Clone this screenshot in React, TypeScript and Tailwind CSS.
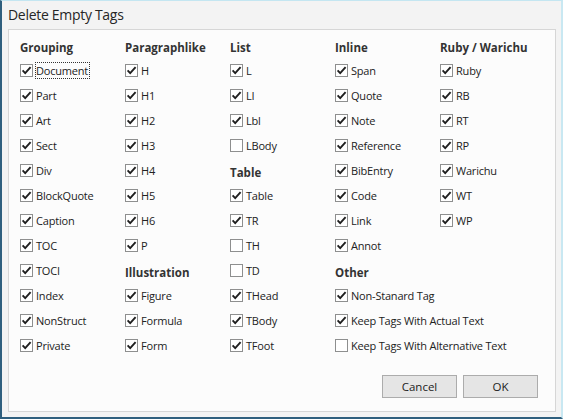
import { Fragment } from "react";

type Row =
  | { kind: "head"; label: string }
  | { kind: "item"; label: string; checked: boolean; focus?: boolean };

const h = (label: string): Row => ({ kind: "head", label });
const c = (label: string, checked = true, focus = false): Row => ({
  kind: "item",
  label,
  checked,
  focus,
});

const columns: Row[][] = [
  [
    h("Grouping"),
    c("Document", true, true),
    c("Part"),
    c("Art"),
    c("Sect"),
    c("Div"),
    c("BlockQuote"),
    c("Caption"),
    c("TOC"),
    c("TOCI"),
    c("Index"),
    c("NonStruct"),
    c("Private"),
  ],
  [
    h("Paragraphlike"),
    c("H"),
    c("H1"),
    c("H2"),
    c("H3"),
    c("H4"),
    c("H5"),
    c("H6"),
    c("P"),
    h("Illustration"),
    c("Figure"),
    c("Formula"),
    c("Form"),
  ],
  [
    h("List"),
    c("L"),
    c("LI"),
    c("Lbl"),
    c("LBody", false),
    h("Table"),
    c("Table"),
    c("TR"),
    c("TH", false),
    c("TD", false),
    c("THead"),
    c("TBody"),
    c("TFoot"),
  ],
  [
    h("Inline"),
    c("Span"),
    c("Quote"),
    c("Note"),
    c("Reference"),
    c("BibEntry"),
    c("Code"),
    c("Link"),
    c("Annot"),
    h("Other"),
    c("Non-Stanard Tag"),
    c("Keep Tags With Actual Text"),
    c("Keep Tags With Alternative Text", false),
  ],
  [
    h("Ruby / Warichu"),
    c("Ruby"),
    c("RB"),
    c("RT"),
    c("RP"),
    c("Warichu"),
    c("WT"),
    c("WP"),
  ],
];

function CheckBox({ checked }: { checked: boolean }) {
  return (
    <span className="flex h-[13px] w-[13px] shrink-0 items-center justify-center border border-[#8e8f8f] bg-white">
      {checked && (
        <svg width="11" height="11" viewBox="0 0 11 11">
          <path
            d="M1.6 5.4 L4.2 8.2 L9.6 2.2"
            fill="none"
            stroke="#1f1f1f"
            strokeWidth="1.9"
          />
        </svg>
      )}
    </span>
  );
}

export default function App() {
  return (
    <div
      className="flex h-[419px] w-[563px] flex-col border-t border-r-2 border-b-2 border-l-2 border-t-[#c4e6f1] border-r-[#c9e8f2] border-b-[#2f5f7e] border-l-[#2f5f7e] bg-[#f3f3f3] text-[#222]"
      style={{ fontFamily: '"Open Sans", "Noto Sans", sans-serif' }}
    >
      <div className="flex h-[28px] items-center px-[6px] pb-[1px] text-[14px] tracking-[-0.3px] text-[#262626]">
        Delete Empty Tags
      </div>

      <div className="mr-[5px] ml-[6px] flex h-[383px] flex-col border border-[#d6d6d6] bg-[#fcfcfc] pt-[3px]">
        <div className="flex pl-[11px]">
          {columns.map((col, i) => (
            <div key={i} className="flex w-[105px] flex-col">
              {col.map((row, j) => (
                <Fragment key={j}>
                  {row.kind === "head" ? (
                    <div className="flex h-[25px] items-center pt-[4px] text-[11.5px] font-bold text-[#333]">
                      {row.label}
                    </div>
                  ) : (
                    <div className="flex h-[25px] items-center gap-[2px] text-[11px] tracking-[-0.2px] whitespace-nowrap">
                      <CheckBox checked={row.checked} />
                      <span
                        className={
                          row.focus
                            ? "border border-dotted border-[#333] pr-[1px] leading-[15px]"
                            : "border border-transparent pr-[1px] leading-[15px]"
                        }
                      >
                        {row.label}
                      </span>
                    </div>
                  )}
                </Fragment>
              ))}
            </div>
          ))}
        </div>

        <div className="mt-[17px] flex justify-end gap-[6px] pr-[17px]">
          <button className="h-[23px] w-[75px] border border-[#acacac] bg-[#e5e5e5] text-[11.5px] text-[#222]">
            Cancel
          </button>
          <button className="h-[23px] w-[75px] border border-[#acacac] bg-[#e5e5e5] text-[11.5px] text-[#222]">
            OK
          </button>
        </div>
      </div>
    </div>
  );
}
